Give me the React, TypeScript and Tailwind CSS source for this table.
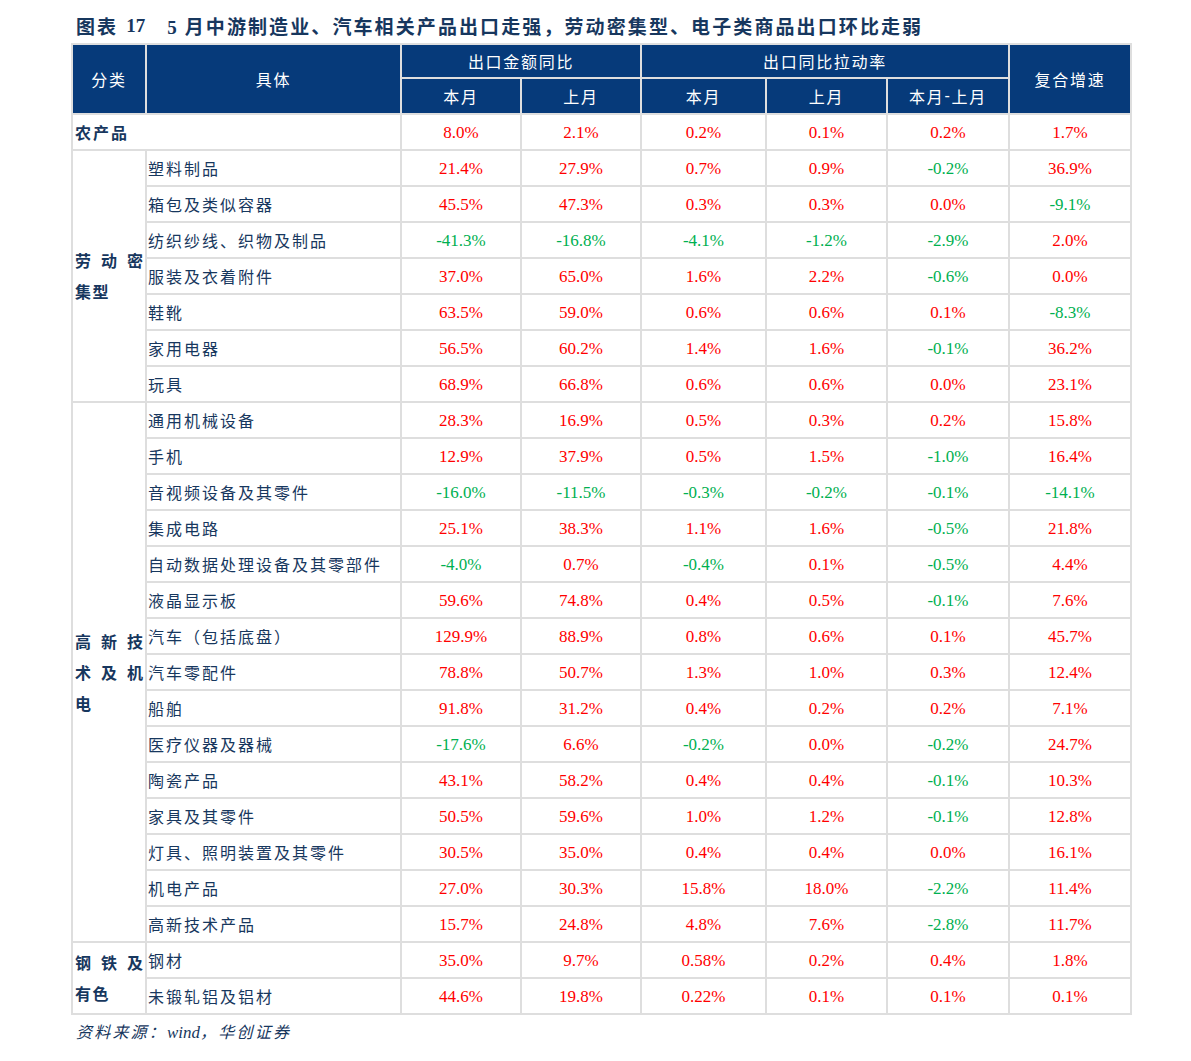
import React from "react";

type Row = { name: string; v: string[] };
type Group = { lines: string[]; rows: Row[] };

const groups: Group[] = [
  {
    lines: ["劳动密", "集型"],
    rows: [
      { name: "塑料制品", v: ["21.4%", "27.9%", "0.7%", "0.9%", "-0.2%", "36.9%"] },
      { name: "箱包及类似容器", v: ["45.5%", "47.3%", "0.3%", "0.3%", "0.0%", "-9.1%"] },
      { name: "纺织纱线、织物及制品", v: ["-41.3%", "-16.8%", "-4.1%", "-1.2%", "-2.9%", "2.0%"] },
      { name: "服装及衣着附件", v: ["37.0%", "65.0%", "1.6%", "2.2%", "-0.6%", "0.0%"] },
      { name: "鞋靴", v: ["63.5%", "59.0%", "0.6%", "0.6%", "0.1%", "-8.3%"] },
      { name: "家用电器", v: ["56.5%", "60.2%", "1.4%", "1.6%", "-0.1%", "36.2%"] },
      { name: "玩具", v: ["68.9%", "66.8%", "0.6%", "0.6%", "0.0%", "23.1%"] },
    ],
  },
  {
    lines: ["高新技", "术及机", "电"],
    rows: [
      { name: "通用机械设备", v: ["28.3%", "16.9%", "0.5%", "0.3%", "0.2%", "15.8%"] },
      { name: "手机", v: ["12.9%", "37.9%", "0.5%", "1.5%", "-1.0%", "16.4%"] },
      { name: "音视频设备及其零件", v: ["-16.0%", "-11.5%", "-0.3%", "-0.2%", "-0.1%", "-14.1%"] },
      { name: "集成电路", v: ["25.1%", "38.3%", "1.1%", "1.6%", "-0.5%", "21.8%"] },
      { name: "自动数据处理设备及其零部件", v: ["-4.0%", "0.7%", "-0.4%", "0.1%", "-0.5%", "4.4%"] },
      { name: "液晶显示板", v: ["59.6%", "74.8%", "0.4%", "0.5%", "-0.1%", "7.6%"] },
      { name: "汽车（包括底盘）", v: ["129.9%", "88.9%", "0.8%", "0.6%", "0.1%", "45.7%"] },
      { name: "汽车零配件", v: ["78.8%", "50.7%", "1.3%", "1.0%", "0.3%", "12.4%"] },
      { name: "船舶", v: ["91.8%", "31.2%", "0.4%", "0.2%", "0.2%", "7.1%"] },
      { name: "医疗仪器及器械", v: ["-17.6%", "6.6%", "-0.2%", "0.0%", "-0.2%", "24.7%"] },
      { name: "陶瓷产品", v: ["43.1%", "58.2%", "0.4%", "0.4%", "-0.1%", "10.3%"] },
      { name: "家具及其零件", v: ["50.5%", "59.6%", "1.0%", "1.2%", "-0.1%", "12.8%"] },
      { name: "灯具、照明装置及其零件", v: ["30.5%", "35.0%", "0.4%", "0.4%", "0.0%", "16.1%"] },
      { name: "机电产品", v: ["27.0%", "30.3%", "15.8%", "18.0%", "-2.2%", "11.4%"] },
      { name: "高新技术产品", v: ["15.7%", "24.8%", "4.8%", "7.6%", "-2.8%", "11.7%"] },
    ],
  },
  {
    lines: ["钢铁及", "有色"],
    rows: [
      { name: "钢材", v: ["35.0%", "9.7%", "0.58%", "0.2%", "0.4%", "1.8%"] },
      { name: "未锻轧铝及铝材", v: ["44.6%", "19.8%", "0.22%", "0.1%", "0.1%", "0.1%"] },
    ],
  },
];

const CJK = "font-['Noto_Sans_CJK_SC',sans-serif]";
const hdr = `bg-[#063a7a] text-white flex items-center justify-center text-[16px] tracking-[1.7px] ${CJK}`;

function Num({ s }: { s: string }) {
  const neg = s.startsWith("-");
  return (
    <div
      className={`bg-white flex items-center justify-center pt-[2px] text-[17px] font-['Liberation_Serif',serif] ${
        neg ? "text-[#00b050]" : "text-[#ff0000]"
      }`}
    >
      {s}
    </div>
  );
}

const rowSpanCls: Record<number, string> = {
  7: "row-span-7",
  15: "row-span-15",
  2: "row-span-2",
};

export default function App() {
  return (
    <div className="bg-white w-[1191px] h-[1061px] pt-[13px] pl-[71px]">
      <div className={`h-[26px] leading-[26px] pl-[5px] text-[19px] font-bold text-[#17375e] tracking-[2.1px] flex ${CJK}`}>
        <span>图表</span>
        <span className="ml-[8px] font-['Liberation_Serif',serif] tracking-normal">17</span>
        <span className="ml-[22px]">
          <span className="font-['Liberation_Serif',serif] tracking-normal mr-[8px]">5</span>
          月中游制造业、汽车相关产品出口走强，劳动密集型、电子类商品出口环比走弱
        </span>
      </div>
      <div className="mt-[4px] w-fit grid grid-cols-[72px_253px_118px_118px_123px_119px_120px_120px] grid-rows-[32px_34px] auto-rows-[34px] gap-[2px] p-[2px] bg-[#dedede]">
        <div className={`${hdr} row-span-2`}>分类</div>
        <div className={`${hdr} row-span-2`}>具体</div>
        <div className={`${hdr} col-span-2`}>出口金额同比</div>
        <div className={`${hdr} col-span-3`}>出口同比拉动率</div>
        <div className={`${hdr} row-span-2`}>复合增速</div>
        <div className={hdr}>本月</div>
        <div className={hdr}>上月</div>
        <div className={hdr}>本月</div>
        <div className={hdr}>上月</div>
        <div className={hdr}>
          本月<span className="font-['Liberation_Sans',sans-serif]">-</span>上月
        </div>

        <div className={`col-span-2 bg-white flex items-center px-[2px] text-[16px] font-bold text-[#17375e] tracking-[2px] ${CJK}`}>
          农产品
        </div>
        {["8.0%", "2.1%", "0.2%", "0.1%", "0.2%", "1.7%"].map((s, i) => (
          <Num key={i} s={s} />
        ))}

        {groups.map((g, gi) => (
          <React.Fragment key={gi}>
            <div
              className={`${rowSpanCls[g.rows.length]} bg-white flex flex-col justify-center px-[2px] text-[16px] font-bold text-[#17375e] leading-[31px] ${CJK}`}
            >
              {g.lines.map((l, li) =>
                l.length === 3 ? (
                  <div key={li} className="flex justify-between">
                    {l.split("").map((c, ci) => (
                      <span key={ci}>{c}</span>
                    ))}
                  </div>
                ) : (
                  <div key={li} className="tracking-[1.5px]">
                    {l}
                  </div>
                )
              )}
            </div>
            {g.rows.map((r, ri) => (
              <React.Fragment key={ri}>
                <div className={`bg-white flex items-center pl-[1px] text-[16px] text-[#17375e] tracking-[2px] ${CJK}`}>
                  {r.name}
                </div>
                {r.v.map((s, i) => (
                  <Num key={i} s={s} />
                ))}
              </React.Fragment>
            ))}
          </React.Fragment>
        ))}
      </div>
      <div className={`mt-[5px] pl-[5px] h-[22px] leading-[22px] text-[16px] italic text-[#17375e] tracking-[2.2px] ${CJK}`}>
        资料来源：<span className="font-['Liberation_Serif',serif] tracking-normal text-[17px]">wind</span>，华创证券
      </div>
    </div>
  );
}
